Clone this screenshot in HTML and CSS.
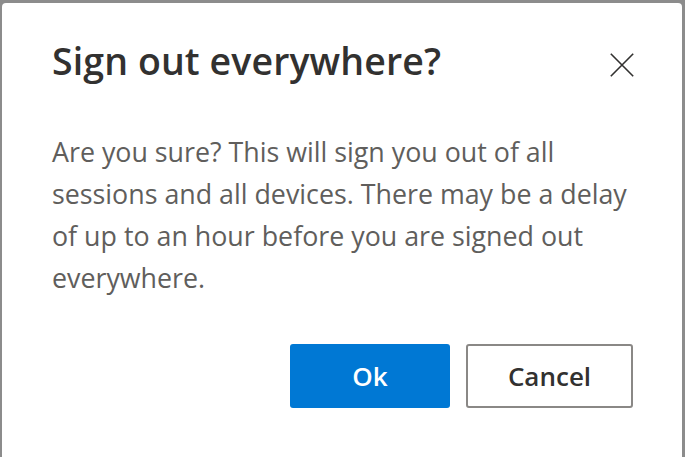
FILE: index.html
```html
<!DOCTYPE html>
<html lang="en">
<head>
<meta charset="utf-8">
<title>Sign out everywhere?</title>
<link rel="stylesheet" href="styles.css">
</head>
<body>
<div class="backdrop">
  <div class="dialog" role="dialog" aria-labelledby="dlg-title">
    <div class="header">
      <h1 class="title" id="dlg-title">Sign out everywhere?</h1>
      <button class="close" aria-label="Close">
        <svg width="24" height="24" viewBox="0 0 24 24"><path d="M0.8 0.8 L23.2 23.2 M23.2 0.8 L0.8 23.2" stroke="#323130" stroke-width="1.6" fill="none"/></svg>
      </button>
    </div>
    <p class="message">Are you sure? This will sign you out of all sessions and all devices. There may be a delay of up to an hour before you are signed out everywhere.</p>
    <div class="actions">
      <button class="btn btn-primary">Ok</button>
      <button class="btn btn-default">Cancel</button>
    </div>
  </div>
</div>
</body>
</html>
```
FILE: styles.css
```css
html, body {
  margin: 0;
  padding: 0;
  height: 100%;
  overflow: hidden;
}
body {
  background: #8c8c8c;
  font-family: "Open Sans", "Noto Sans", sans-serif;
}
.backdrop {
  padding: 3px 3px 0 2px;
  height: 100%;
  box-sizing: border-box;
}
.dialog {
  background: #ffffff;
  border-radius: 4px 4px 0 0;
  height: 100%;
  box-sizing: border-box;
  padding: 32px 0 0 50px;
}
.header {
  display: flex;
  align-items: flex-start;
  justify-content: space-between;
  padding-right: 48px;
}
.title {
  margin: 0;
  font-size: 37.5px;
  font-weight: 600;
  color: #323130;
  line-height: 52px;
  letter-spacing: 0.1px;
}
.close {
  border: none;
  background: none;
  padding: 0;
  margin-top: 18px;
  width: 24px;
  height: 24px;
  display: block;
}
.close svg { display: block; }
.message {
  margin: 44px 0 0;
  width: 580px;
  font-size: 26.8px;
  line-height: 42px;
  color: #605e5c;
}
.actions {
  display: flex;
  gap: 16px;
  justify-content: flex-end;
  padding-right: 49px;
  margin-top: 45px;
}
.btn {
  height: 64px;
  border-radius: 3px;
  font-family: inherit;
  font-size: 26px;
  font-weight: 600;
  cursor: pointer;
}
.btn-primary {
  width: 160px;
  background: #0078d4;
  color: #ffffff;
  border: none;
}
.btn-default {
  width: 167px;
  background: #ffffff;
  color: #323130;
  border: 2px solid #8a8886;
}
```
